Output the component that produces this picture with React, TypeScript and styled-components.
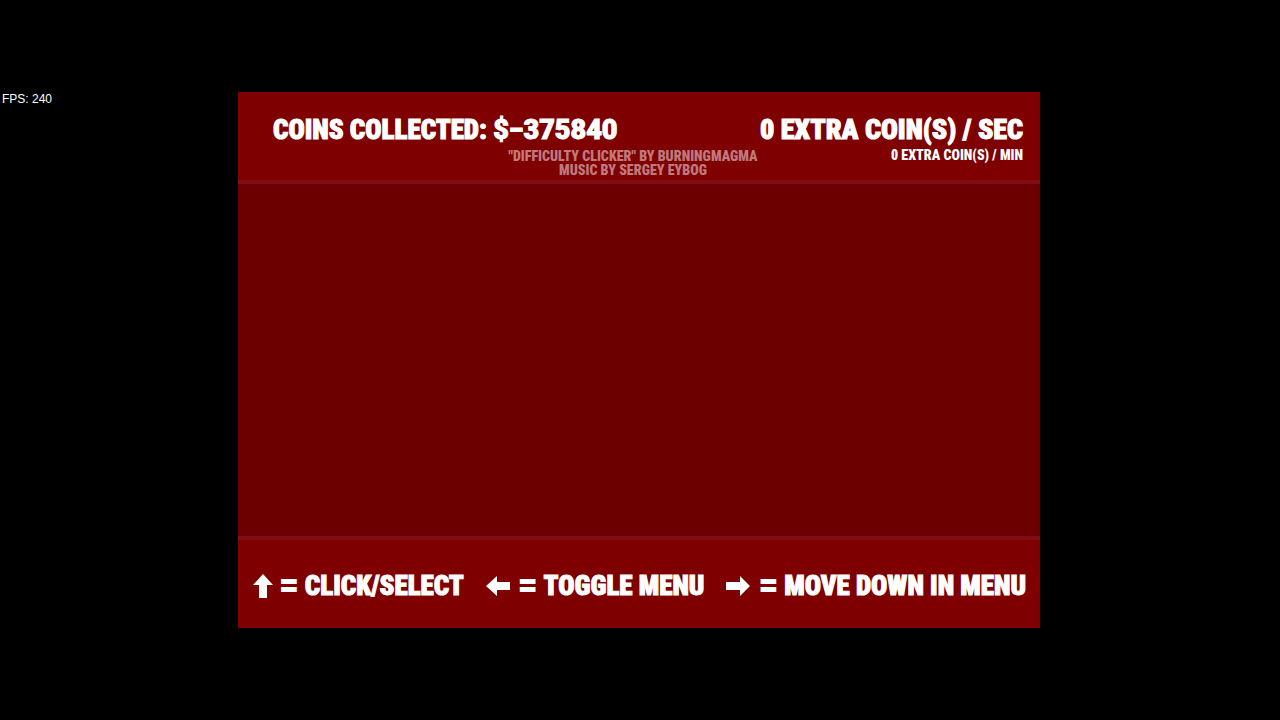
import React from "react";
import styled, { createGlobalStyle } from "styled-components";

const GlobalStyle = createGlobalStyle`
  * { box-sizing: border-box; }
  body { margin: 0; background: #000; }
`;

const Page = styled.main`
  display: grid;
  grid-template-columns: 238fr 802fr 240fr;
  min-height: 100vh;
  padding: 92px 0;
  background: #000;
  color: #fff;
`;

const FrameRate = styled.p`
  margin: 0;
  padding-left: 2px;
  font: 12px/14px "Liberation Sans", sans-serif;
`;

const Game = styled.section`
  display: flex;
  flex-direction: column;
  min-width: 0;
  background: #6c0000;
  font-family: "Roboto Condensed", Oswald, sans-serif;
  font-weight: 900;
  text-transform: uppercase;
  white-space: nowrap;
`;

const Header = styled.header`
  display: grid;
  grid-template-columns: auto auto;
  grid-template-rows: 34px 1fr;
  justify-content: space-between;
  height: 92px;
  padding: 21px 17px 0 35px;
  background: #7e0000;
  border-bottom: 4px solid #830d17;
`;

const Score = styled.h1`
  margin: 0;
  font-size: 27px;
  font-weight: 900;
  line-height: 34px;
  -webkit-text-stroke: 1px #fff;
`;

const Amount = styled.span`
  font-family: Roboto, sans-serif;
`;

const Rate = styled.p<{ $small?: boolean }>`
  grid-area: ${(p) => (p.$small ? "2 / 2" : "1 / 2")};
  margin: 0;
  text-align: right;
  font-size: ${(p) => (p.$small ? 14 : 28)}px;
  line-height: ${(p) => (p.$small ? 16 : 34)}px;
  -webkit-text-stroke: ${(p) => (p.$small ? "0" : "1px")} #fff;
`;

const Credits = styled.p`
  grid-area: 2 / 1 / 3 / 3;
  margin: 2px 30px 0 0;
  text-align: center;
  color: #c07a7e;
  font-size: 14px;
  line-height: 14px;
`;

const Field = styled.div`
  flex: 1;
`;

const Footer = styled.footer`
  height: 92px;
  padding: 2px 14px 0 15px;
  background: #7e0000;
  border-top: 4px solid #830d17;
`;

const Controls = styled.ul`
  display: flex;
  align-items: center;
  justify-content: space-between;
  height: 88px;
  margin: 0;
  padding: 0;
  list-style: none;
`;

const Control = styled.li`
  display: flex;
  align-items: center;
  gap: 8px;
  font-size: 27px;
  line-height: 34px;
  -webkit-text-stroke: 1px #fff;
`;

const Equals = styled.span`
  font-family: "Liberation Sans", sans-serif;
  -webkit-text-stroke: 2px #fff;
`;

const arrows = {
  up: "M10 0 20 11H14V24H6V11H0Z",
  left: "M0 12 11 2V8H24V16H11V22Z",
  right: "M24 12 14 2V8H0V16H14V22Z",
};

function Arrow({ direction }: { direction: keyof typeof arrows }) {
  const width = direction === "up" ? 20 : 26;
  return (
    <svg width={width} height="24" viewBox={`0 0 ${width} 24`} role="img" aria-label={direction}>
      <path d={arrows[direction]} fill="#fff" />
    </svg>
  );
}

const controls: { direction: keyof typeof arrows; action: string }[] = [
  { direction: "up", action: "Click/Select" },
  { direction: "left", action: "Toggle Menu" },
  { direction: "right", action: "Move Down in Menu" },
];

export default function App() {
  return (
    <Page>
      <GlobalStyle />
      <FrameRate>FPS: 240</FrameRate>
      <Game>
        <Header>
          <Score>
            Coins collected: <Amount>$−375840</Amount>
          </Score>
          <Rate>0 extra coin(s) / sec</Rate>
          <Rate $small>0 extra coin(s) / min</Rate>
          <Credits>
            "Difficulty Clicker" by BurningMagma
            <br />
            Music by Sergey Eybog
          </Credits>
        </Header>
        <Field />
        <Footer>
          <Controls>
            {controls.map(({ direction, action }) => (
              <Control key={direction}>
                <Arrow direction={direction} />
                <Equals>=</Equals>
                <span>{action}</span>
              </Control>
            ))}
          </Controls>
        </Footer>
      </Game>
    </Page>
  );
}
